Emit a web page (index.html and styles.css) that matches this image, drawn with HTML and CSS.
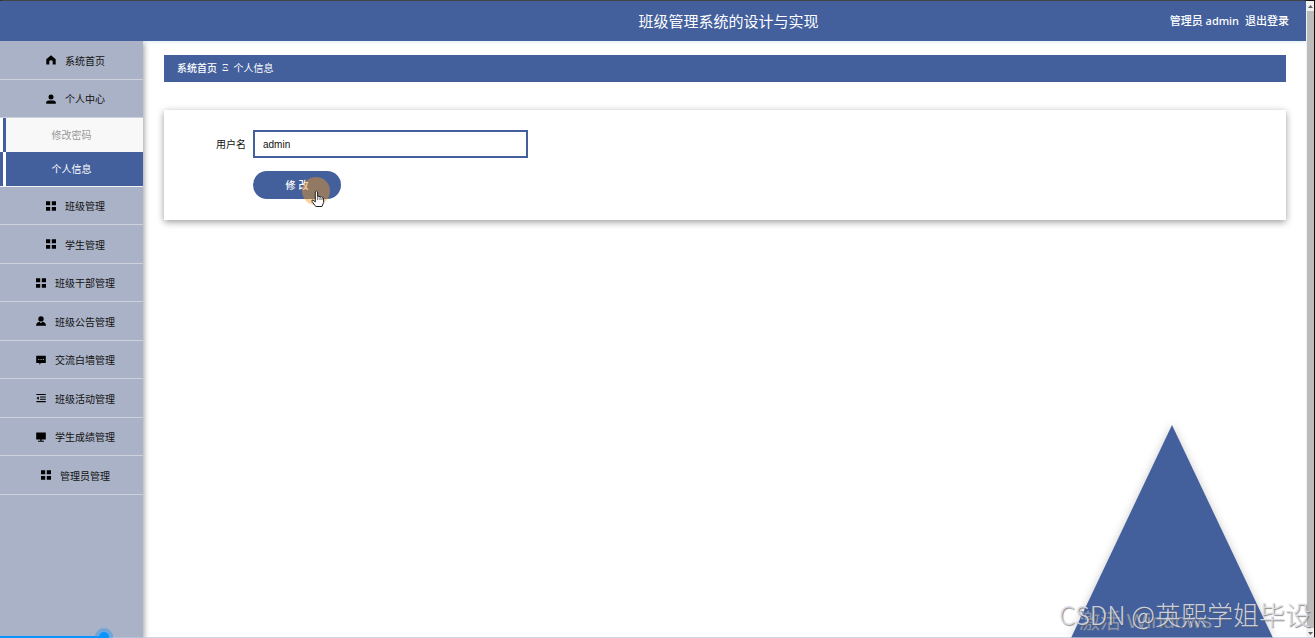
FILE: index.html
```html
<!DOCTYPE html>
<html lang="zh-CN">
<head>
<meta charset="utf-8">
<title>班级管理系统的设计与实现</title>
<link rel="stylesheet" href="styles.css">
</head>
<body>
<svg class="symbols" aria-hidden="true">
  <symbol id="home" viewBox="0 0 10 10"><path d="M5 0.3 9.7 4.2V9.6H6.7V6.4Q6.7 5.2 5 5.2T3.3 6.4V9.6H.3V4.2Z"/></symbol>
  <symbol id="user" viewBox="0 0 10 10"><circle cx="5" cy="2.9" r="2.5"/><path d="M.2 9.8V8.5Q.2 6.4 2.6 6.4H7.4Q9.8 6.4 9.8 8.5V9.8Z"/></symbol>
  <symbol id="grid" viewBox="0 0 10 10"><path d="M0 .3H4.2V4.3H0ZM5.8.3H10V4.3H5.8ZM0 5.9H4.2V9.8H0ZM5.8 5.9H10V9.8H5.8Z"/></symbol>
  <symbol id="person" viewBox="0 0 10 10"><circle cx="5" cy="2.9" r="2.7"/><path d="M0 9.8Q.2 6.2 3.5 5.8L5 7.3 6.5 5.8Q9.8 6.2 10 9.8Z"/></symbol>
  <symbol id="chat" viewBox="0 0 10 10"><path fill-rule="evenodd" d="M.2.8H9.8V8H5L3.4 9.8V8H.2ZM2.2 3.9V5H3.3V3.9ZM4.5 3.9V5H5.6V3.9ZM6.8 3.9V5H7.9V3.9Z"/></symbol>
  <symbol id="list" viewBox="0 0 10 10"><path d="M.4 1H9.8V2.1H.4ZM4 3.5H9.8V4.5H4ZM4 5.8H9.8V6.8H4ZM.4 8.1H9.8V9.2H.4ZM2.8 3.4V6.9L.4 5.1Z"/></symbol>
  <symbol id="screen" viewBox="0 0 10 10"><path d="M.2.4H9.8V7.4H.2ZM4.3 7.4H5.7V8.7H8V9.7H2V8.7H4.3Z"/></symbol>
</svg>

<div class="window">
  <div class="page">
    <header class="topbar">
      <h1 class="title">班级管理系统的设计与实现</h1>
      <div class="account"><span>管理员 admin</span><a href="#">退出登录</a></div>
    </header>

    <div class="body">
      <nav class="sidebar">
        <a class="item" href="#"><svg class="icon"><use href="#home"/></svg>系统首页</a>
        <a class="item" href="#"><svg class="icon"><use href="#user"/></svg>个人中心</a>
        <div class="submenu">
          <a class="subitem" href="#">修改密码</a>
          <a class="subitem active" href="#">个人信息</a>
        </div>
        <a class="item" href="#"><svg class="icon"><use href="#grid"/></svg>班级管理</a>
        <a class="item" href="#"><svg class="icon"><use href="#grid"/></svg>学生管理</a>
        <a class="item" href="#"><svg class="icon"><use href="#grid"/></svg>班级干部管理</a>
        <a class="item" href="#"><svg class="icon"><use href="#person"/></svg>班级公告管理</a>
        <a class="item" href="#"><svg class="icon"><use href="#chat"/></svg>交流白墙管理</a>
        <a class="item" href="#"><svg class="icon"><use href="#list"/></svg>班级活动管理</a>
        <a class="item" href="#"><svg class="icon"><use href="#screen"/></svg>学生成绩管理</a>
        <a class="item" href="#"><svg class="icon"><use href="#grid"/></svg>管理员管理</a>
      </nav>

      <main class="content">
        <div class="breadcrumb"><a href="#">系统首页</a><span class="separator">Ξ</span><span>个人信息</span></div>
        <form class="card">
          <label class="label" for="username">用户名</label>
          <input class="field" id="username" type="text" value="admin">
          <button class="submit" type="button">修 改</button>
        </form>
      </main>
    </div>
  </div>

  <div class="scrollbar">
    <svg class="arrow" viewBox="0 0 7 10"><path d="M1 7 3.5 4 6 7Z"/></svg>
    <div class="thumb"></div>
    <svg class="arrow" viewBox="0 0 7 10"><path d="M1 4H6L3.5 7Z"/></svg>
  </div>
</div>

<svg class="triangle" viewBox="0 0 220 222" aria-hidden="true"><path d="M110 9 211 222H9Z"/></svg>
<div class="activate">激活 Windows</div>
<div class="watermark">CSDN @英熙学姐毕设</div>
<div class="progress"><div class="played"></div></div>
<svg class="cursor" viewBox="0 0 30 32" aria-hidden="true">
  <circle cx="14" cy="14" r="14" fill="#f29a1f" fill-opacity=".45"/>
  <path d="M13.3 14.8Q14.5 13.3 15.6 14.8V19.4L17 19.2 18.2 20 19.4 19.8 20.4 20.6Q21.6 20.5 21.6 22V25.5L20 29.5H13.8L10 24.5Q9.6 22.8 11 23L13.3 25Z" fill="#fff" stroke="#222" stroke-width="1"/>
  <path d="M15.7 19.6V23M18 20.2V23M20 20.8V23" stroke="#222" stroke-width=".7"/>
</svg>
</body>
</html>
```

FILE: styles.css
```css
* {
  box-sizing: border-box;
}

body {
  margin: 0;
  overflow: hidden;
  background: #fff;
  color: #111;
  font-family: "Liberation Sans", "Noto Sans CJK SC", sans-serif;
  font-size: 10px;
}

a {
  color: inherit;
  text-decoration: none;
}

.symbols {
  display: none;
}

.window {
  display: flex;
  min-height: 100vh;
  border-top: 1px solid #111;
  border-right: 1px solid #111;
}

.page {
  display: flex;
  flex: 1;
  flex-direction: column;
}

.topbar {
  display: grid;
  grid-template-columns: 1fr auto 1fr;
  align-items: center;
  height: 40px;
  padding: 0 17px 2px 0;
  background: #43609d;
  color: #fff;
  box-shadow: 0 1px 4px #dcecf8;
  font-family: "Noto Sans", "Noto Sans CJK SC", sans-serif;
}

.title {
  grid-column: 2;
  margin: 0 0 0 168px;
  font-size: 15px;
  font-weight: 400;
}

.account {
  display: flex;
  justify-content: flex-end;
  gap: 6px;
  font-size: 11px;
  font-weight: 500;
}

.body {
  display: flex;
  flex: 1;
}

.sidebar {
  width: 143px;
  background: #a9b2c6;
  box-shadow: 1px 2px 6px rgba(0, 0, 0, .4);
  clip-path: inset(0 -10px 0 0);
}

.item {
  display: flex;
  align-items: center;
  justify-content: center;
  gap: 9px;
  height: 38px;
  padding-left: 8px;
  border-bottom: 1px solid #cdd1dc;
}

.item:nth-child(odd) {
  height: 39px;
}

.icon {
  width: 10px;
  height: 10px;
}

.subitem {
  display: flex;
  align-items: center;
  justify-content: center;
  height: 34px;
  padding: 0 3px 2px 0;
  border-left: 3px solid #fff;
  box-shadow: inset 3px 0 #43609d;
  background: #f8f8f8;
  color: #999;
}

.submenu {
  padding-bottom: 1px;
  background: #f0f1f5;
}

.subitem.active {
  border-left-color: #43609d;
  box-shadow: inset 3px 0 #fff;
  background: #43609d;
  color: #fff;
}

.content {
  display: flex;
  flex: 1;
  flex-direction: column;
  gap: 28px;
  padding: 14px 20px 14px 21px;
}

.breadcrumb {
  display: flex;
  align-items: center;
  gap: 5px;
  height: 27px;
  padding: 0 13px 2px;
  background: #43609d;
  color: #fff;
}

.breadcrumb a {
  font-weight: 500;
}

.separator {
  font-family: "Liberation Serif", serif;
}

.card {
  display: grid;
  grid-template-columns: 82px 275px;
  align-items: center;
  gap: 13px 7px;
  padding: 20px 0 21px;
  box-shadow: 0 2px 7px rgba(0, 0, 0, .4);
}

.label {
  padding-bottom: 2px;
  text-align: right;
}

.field {
  height: 28px;
  padding: 0 8px;
  border: 2px solid #43609d;
  background: #fff;
  color: #111;
  font: inherit;
}

.submit {
  grid-column: 2;
  width: 88px;
  height: 28px;
  padding: 0 0 2px;
  border: 0;
  border-radius: 14px;
  background: #43609d;
  color: #fff;
  font: inherit;
  font-weight: 500;
}

.scrollbar {
  display: flex;
  flex-direction: column;
  width: 8px;
  padding-left: 1px;
  background: #f1f1f1;
}

.arrow {
  width: 7px;
  height: 10px;
  fill: #666;
}

.thumb {
  flex: 1;
  background: #bcbcbc;
}

.triangle {
  position: absolute;
  right: 33px;
  bottom: 0;
  width: 220px;
  height: 222px;
  fill: #43609d;
  filter: drop-shadow(0 0 4px rgba(0, 0, 0, .2));
}

.activate {
  position: absolute;
  right: 103px;
  bottom: 5px;
  color: #8f95a3;
  font-size: 21px;
  line-height: 24px;
}

.watermark {
  position: absolute;
  right: 4px;
  bottom: 6px;
  color: rgba(218, 222, 232, .9);
  font-family: "Noto Sans CJK SC", sans-serif;
  font-size: 26px;
  font-weight: 300;
  line-height: 36px;
  text-shadow: 1px 1px 1px rgba(90, 90, 90, .7);
}

.progress {
  position: absolute;
  right: 0;
  bottom: 0;
  left: 0;
  height: 1px;
  background: rgba(190, 200, 220, .7);
}

.played {
  position: absolute;
  bottom: 0;
  width: 104px;
  height: 2px;
  background: #0a94ff;
}

.played::after {
  position: absolute;
  right: -5px;
  bottom: -4px;
  width: 10px;
  height: 10px;
  border-radius: 50%;
  background: #0a94ff;
  box-shadow: 0 0 0 4px rgba(40, 150, 240, .45);
  content: "";
}

.cursor {
  position: absolute;
  top: 177px;
  left: 302px;
  width: 30px;
  height: 32px;
}
```
